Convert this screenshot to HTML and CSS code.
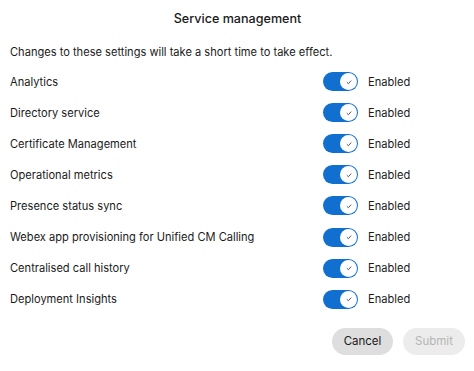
FILE: index.html
```html
<!DOCTYPE html>
<html lang="en">
<head>
    <meta charset="UTF-8">
    <meta name="viewport" content="width=device-width, initial-scale=1.0">
    <title>Service management</title>
    <link rel="stylesheet" href="styles.css">
</head>
<body>
    <div class="modal">
        <h2 class="modal-title">Service management</h2>
        <p class="modal-desc">Changes to these settings will take a short time to take effect.</p>

        <div class="service-list">
            <div class="service-row">
                <span class="service-name">Analytics</span>
                <div class="toggle-wrap"><span class="toggle"><span class="knob"><svg viewBox="0 0 10 10"><path d="M2.8 5.2 L4.4 6.7 L7.2 3.6"/></svg></span></span><span class="toggle-label">Enabled</span></div>
            </div>
            <div class="service-row">
                <span class="service-name">Directory service</span>
                <div class="toggle-wrap"><span class="toggle"><span class="knob"><svg viewBox="0 0 10 10"><path d="M2.8 5.2 L4.4 6.7 L7.2 3.6"/></svg></span></span><span class="toggle-label">Enabled</span></div>
            </div>
            <div class="service-row">
                <span class="service-name">Certificate Management</span>
                <div class="toggle-wrap"><span class="toggle"><span class="knob"><svg viewBox="0 0 10 10"><path d="M2.8 5.2 L4.4 6.7 L7.2 3.6"/></svg></span></span><span class="toggle-label">Enabled</span></div>
            </div>
            <div class="service-row">
                <span class="service-name">Operational metrics</span>
                <div class="toggle-wrap"><span class="toggle"><span class="knob"><svg viewBox="0 0 10 10"><path d="M2.8 5.2 L4.4 6.7 L7.2 3.6"/></svg></span></span><span class="toggle-label">Enabled</span></div>
            </div>
            <div class="service-row">
                <span class="service-name">Presence status sync</span>
                <div class="toggle-wrap"><span class="toggle"><span class="knob"><svg viewBox="0 0 10 10"><path d="M2.8 5.2 L4.4 6.7 L7.2 3.6"/></svg></span></span><span class="toggle-label">Enabled</span></div>
            </div>
            <div class="service-row">
                <span class="service-name">Webex app provisioning for Unified CM Calling</span>
                <div class="toggle-wrap"><span class="toggle"><span class="knob"><svg viewBox="0 0 10 10"><path d="M2.8 5.2 L4.4 6.7 L7.2 3.6"/></svg></span></span><span class="toggle-label">Enabled</span></div>
            </div>
            <div class="service-row">
                <span class="service-name">Centralised call history</span>
                <div class="toggle-wrap"><span class="toggle"><span class="knob"><svg viewBox="0 0 10 10"><path d="M2.8 5.2 L4.4 6.7 L7.2 3.6"/></svg></span></span><span class="toggle-label">Enabled</span></div>
            </div>
            <div class="service-row">
                <span class="service-name">Deployment Insights</span>
                <div class="toggle-wrap"><span class="toggle"><span class="knob"><svg viewBox="0 0 10 10"><path d="M2.8 5.2 L4.4 6.7 L7.2 3.6"/></svg></span></span><span class="toggle-label">Enabled</span></div>
            </div>
        </div>

        <div class="modal-footer">
            <button class="btn">Cancel</button>
            <button class="btn btn-disabled" disabled>Submit</button>
        </div>
    </div>
</body>
</html>
```

FILE: styles.css
```css
body {
  font-family: Inter, "Noto Sans", sans-serif;
  margin: 0;
  padding: 0;
  background-color: #fff;
  color: #1a1a1a;
}

.modal {
  width: 474px;
  padding: 10px 9px 0 10px;
  box-sizing: border-box;
}

.modal-title {
  margin: 0;
  font-size: 12.6px;
  font-weight: 500;
  text-align: center;
  line-height: 17px;
}

.modal-desc {
  margin: 17px 0 0 0;
  font-size: 11.1px;
  line-height: 16px;
}

.service-list {
  margin-top: 6px;
}

.service-row {
  display: flex;
  justify-content: space-between;
  align-items: center;
  height: 31.1px;
  font-size: 11.1px;
}

.toggle-wrap {
  display: flex;
  align-items: center;
  width: 142px;
}

.toggle {
  display: flex;
  align-items: center;
  justify-content: flex-end;
  width: 35px;
  height: 19px;
  box-sizing: border-box;
  padding-right: 1px;
  border-radius: 10px;
  background-color: #1170cf;
}

.knob {
  display: flex;
  align-items: center;
  justify-content: center;
  width: 17px;
  height: 17px;
  border-radius: 50%;
  background-color: #fff;
}

.knob svg {
  width: 10px;
  height: 10px;
  fill: none;
  stroke: #555;
  stroke-width: 1;
}

.toggle-label {
  margin-left: 10px;
}

.modal-footer {
  display: flex;
  justify-content: flex-end;
  gap: 10px;
  margin-top: 13px;
}

.btn {
  font-family: Inter, "Noto Sans", sans-serif;
  font-size: 11.5px;
  height: 27px;
  width: 61px;
  padding: 0;
  border: none;
  border-radius: 14px;
  background-color: #dedede;
  color: #1a1a1a;
  cursor: pointer;
}

.btn-disabled {
  width: 62px;
  background-color: #ececec;
  color: #b5b5b5;
  cursor: default;
}
```
